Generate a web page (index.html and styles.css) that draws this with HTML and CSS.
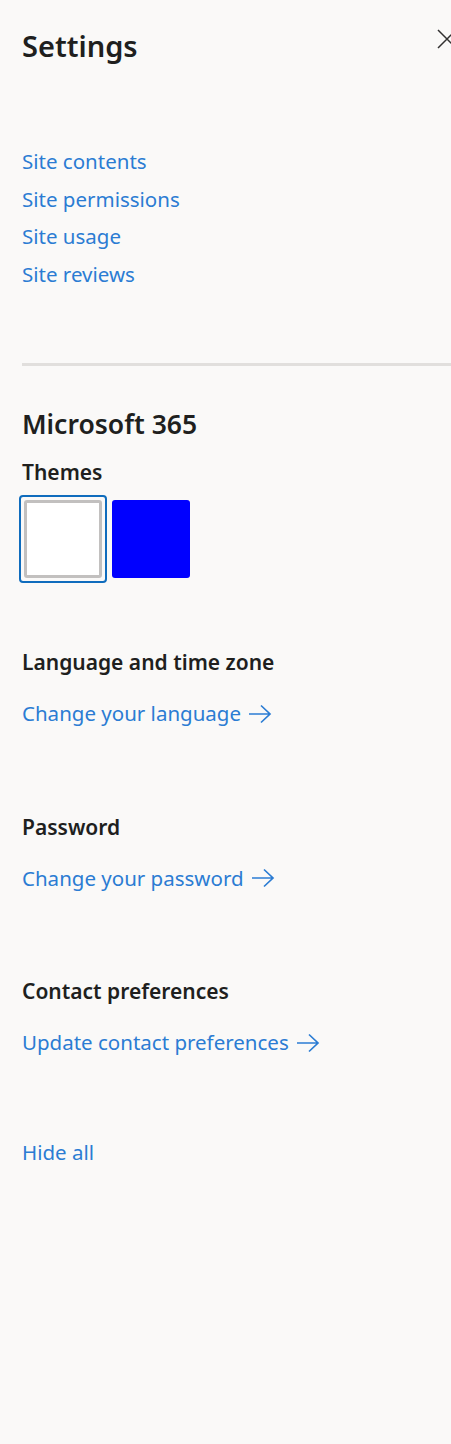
FILE: index.html
```html
<!DOCTYPE html>
<html lang="en">
<head>
<meta charset="utf-8">
<title>Settings</title>
<link rel="stylesheet" href="styles.css">
</head>
<body>
<div class="panel">
  <header class="header">
    <h1 class="title">Settings</h1>
    <button class="close" aria-label="Close">
      <svg viewBox="0 0 20 20" width="20" height="20"><path d="M1 1 L19 19 M19 1 L1 19" stroke="#323130" stroke-width="1.5" fill="none"/></svg>
    </button>
  </header>
  <nav class="site-links">
    <a href="#">Site contents</a>
    <a href="#">Site permissions</a>
    <a href="#">Site usage</a>
    <a href="#">Site reviews</a>
  </nav>
  <hr class="divider">
  <section class="m365">
    <h2 class="m365-title">Microsoft 365</h2>
    <h3 class="sub">Themes</h3>
    <div class="themes">
      <div class="theme selected"><div class="swatch white"></div></div>
      <div class="theme"><div class="swatch blue"></div></div>
    </div>
  </section>
  <section class="group first">
    <h3 class="sub">Language and time zone</h3>
    <a class="arrow-link" href="#">Change your language <span class="arrow"><svg viewBox="0 0 24 20" width="24" height="20"><path d="M1 10 H22 M13 1.5 L22 10 L13 18.5" stroke="#2b7cd3" stroke-width="1.7" fill="none"/></svg></span></a>
  </section>
  <section class="group">
    <h3 class="sub">Password</h3>
    <a class="arrow-link" href="#">Change your password <span class="arrow"><svg viewBox="0 0 24 20" width="24" height="20"><path d="M1 10 H22 M13 1.5 L22 10 L13 18.5" stroke="#2b7cd3" stroke-width="1.7" fill="none"/></svg></span></a>
  </section>
  <section class="group">
    <h3 class="sub">Contact preferences</h3>
    <a class="arrow-link" href="#">Update contact preferences <span class="arrow"><svg viewBox="0 0 24 20" width="24" height="20"><path d="M1 10 H22 M13 1.5 L22 10 L13 18.5" stroke="#2b7cd3" stroke-width="1.7" fill="none"/></svg></span></a>
  </section>
  <a class="hide-all" href="#">Hide all</a>
</div>
</body>
</html>
```
FILE: styles.css
```css
html, body {
  margin: 0;
  padding: 0;
  background: #faf9f8;
  overflow: hidden;
}
body {
  font-family: "Noto Sans", "Open Sans", sans-serif;
  color: #201f1e;
  height: 1444px;
}
.panel {
  padding-left: 22px;
}
.header {
  display: flex;
  justify-content: space-between;
  align-items: flex-start;
  padding-top: 26px;
  height: 117px;
  box-sizing: border-box;
}
.title {
  margin: 0;
  font-size: 29px;
  line-height: 40px;
  font-weight: 600;
}
.close {
  border: 0;
  background: none;
  padding: 0;
  margin-top: 3px;
  margin-right: -6px;
  width: 20px;
  height: 20px;
  flex: none;
}
.site-links {
  display: flex;
  flex-direction: column;
  padding-top: 26px;
}
.site-links a,
.arrow-link,
.hide-all {
  color: #2b7cd3;
  text-decoration: none;
  font-size: 20.5px;
  line-height: 37.5px;
}
.divider {
  border: 0;
  height: 3px;
  background: #e1dfdd;
  margin: 70px 0 0 0;
}
.m365 {
  padding-top: 40px;
}
.m365-title {
  margin: 0;
  font-size: 26.5px;
  line-height: 36px;
  font-weight: 600;
}
.sub {
  margin: 0;
  font-size: 21px;
  line-height: 30px;
  font-weight: 600;
}
.m365 .sub {
  margin-top: 15px;
}
.themes {
  display: flex;
  gap: 0;
  margin-top: 8px;
  margin-left: -3px;
}
.theme {
  width: 88px;
  height: 88px;
  box-sizing: border-box;
  border: 2px solid transparent;
  border-radius: 4px;
  padding: 3px;
}
.theme.selected {
  border-color: #0f6cbd;
}
.swatch {
  width: 100%;
  height: 100%;
  box-sizing: border-box;
  border-radius: 3px;
}
.swatch.white {
  background: #ffffff;
  border: 3px solid #c2c0bf;
}
.swatch.blue {
  background: #0000ff;
}
.group {
  padding-top: 79px;
}
.group.first {
  padding-top: 64px;
}
.arrow-link {
  display: inline-flex;
  align-items: center;
  margin-top: 18px;
}
.arrow {
  display: inline-flex;
  margin-left: 7px;
}
.hide-all {
  display: inline-block;
  margin-top: 72px;
}
```
